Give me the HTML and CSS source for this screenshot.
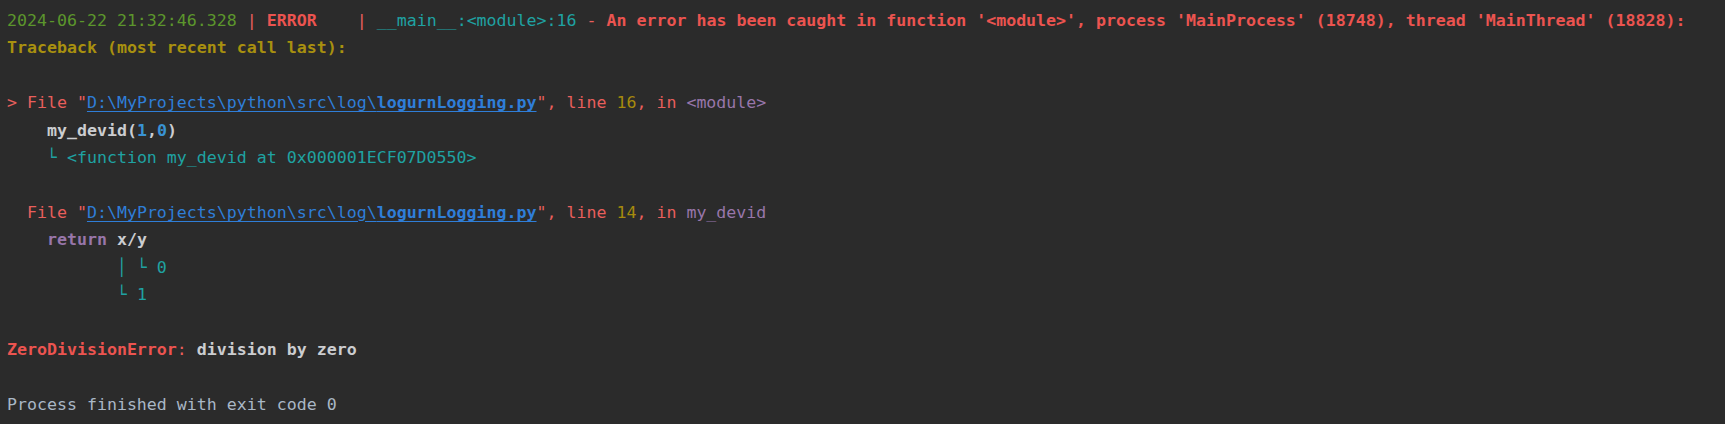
FILE: index.html
```html
<!DOCTYPE html>
<html lang="en">
<head>
<meta charset="utf-8">
<title>Run console</title>
<link rel="stylesheet" href="styles.css">
</head>
<body>
<pre class="console"><span class="ts">2024-06-22 21:32:46.328</span><span class="err"> | </span><span class="lvl">ERROR   </span><span class="err"> | </span><span class="cy">__main__</span><span class="cy">:</span><span class="cy">&lt;module&gt;</span><span class="cy">:16</span><span class="err"> - </span><span class="lvl">An error has been caught in function '&lt;module&gt;', process 'MainProcess' (18748), thread 'MainThread' (18828):</span>
<span class="tb">Traceback (most recent call last):</span>

<span class="err">&gt; File "</span><a class="lnk">D:\MyProjects\python\src\log\<b>logurnLogging.py</b></a><span class="err">", line </span><span class="num">16</span><span class="err">, in </span><span class="mg">&lt;module&gt;</span>
    <span class="code">my_devid(</span><span class="bl">1</span><span class="code">,</span><span class="bl">0</span><span class="code">)</span>
    <span class="cy">└ &lt;function my_devid at 0x000001ECF07D0550&gt;</span>

<span class="err">  File "</span><a class="lnk">D:\MyProjects\python\src\log\<b>logurnLogging.py</b></a><span class="err">", line </span><span class="num">14</span><span class="err">, in </span><span class="mg">my_devid</span>
    <span class="kw">return</span> <span class="code">x/y</span>
           <span class="cy">│ └ 0</span>
           <span class="cy">└ 1</span>

<span class="lvl">ZeroDivisionError</span><span class="err">:</span> <span class="code">division by zero</span>

<span class="plain">Process finished with exit code 0</span>
</pre>
</body>
</html>
```

FILE: styles.css
```css
html, body {
  margin: 0;
  padding: 0;
  background: #2b2b2b;
  height: 100%;
}

.console {
  margin: 0;
  padding: 6.8px 0 0 7px;
  font-family: "DejaVu Sans Mono", "Liberation Mono", monospace;
  font-size: 16.6px;
  line-height: 27.45px;
  color: #e85f5c;
  white-space: pre;
}

.ts { color: #5c962c; }
.err { color: #e85f5c; }
.lvl { color: #ec5450; font-weight: bold; }
.cy { color: #1fa2a2; }
.tb { color: #a8900f; font-weight: bold; }
.lnk { color: #2f7ed8; text-decoration: underline; text-underline-offset: 3px; }
.lnk b { font-weight: bold; }
.num { color: #a68a0d; }
.mg { color: #9876aa; }
.kw { color: #9876aa; font-weight: bold; }
.code { color: #cbcdd0; font-weight: bold; }
.bl { color: #3993d4; font-weight: bold; }
.plain { color: #a9b7c6; }
```
